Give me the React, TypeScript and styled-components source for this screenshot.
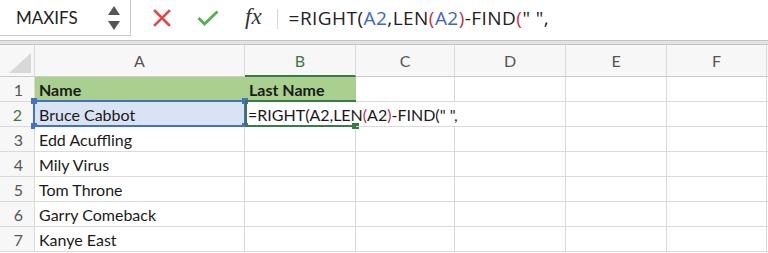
import styled, { createGlobalStyle, css } from 'styled-components';

const GlobalStyle = createGlobalStyle`
    html, body {
        margin: 0;
        padding: 0;
        background: #ffffff;
        overflow: hidden;
    }
    * {
        box-sizing: border-box;
    }
`;

const GRID = '#dadada';
const EXCEL_GREEN = '#3a7a47';
const REF_BLUE = '#4470c8';

const Window = styled.div`
    display: flex;
    flex-direction: column;
    width: 768px;
    height: 253px;
    font-family: Lato, "Open Sans", sans-serif;
    color: #1a1a1a;
`;

const FormulaBar = styled.div`
    display: flex;
    align-items: flex-start;
    height: 40px;
    background: #ffffff;
`;

const NameBox = styled.div`
    display: flex;
    align-items: center;
    justify-content: space-between;
    width: 131px;
    height: 36px;
    padding: 0 10px 0 16px;
    border-right: 1px solid #c8c8c8;
    border-bottom: 1px solid #c8c8c8;
    font-size: 17px;
    color: #222;
`;

const Spinner = styled.div`
    display: flex;
    flex-direction: column;
    gap: 6px;
    margin-top: 1px;
`;

const Actions = styled.div`
    display: flex;
    align-items: center;
    height: 36px;
    padding-left: 22px;
    gap: 26px;
`;

const Fx = styled.span`
    font-family: "Liberation Serif", "DejaVu Serif", serif;
    font-style: italic;
    font-size: 23px;
    color: #333;
    margin-top: -2px;
`;

const Divider = styled.div`
    width: 1px;
    height: 20px;
    margin: 9px 11px 0 15px;
    background: #d6d6d6;
`;

const Formula = styled.div`
    display: flex;
    align-items: center;
    height: 36px;
    font-family: "Open Sans", Lato, sans-serif;
    font-size: 19px;
    letter-spacing: 0.45px;
    color: #222;
    white-space: pre;
`;

const Token = styled.span<{ $tone?: 'ref' | 'paren' }>`
    color: ${(p) => (p.$tone === 'ref' ? '#3a66c4' : p.$tone === 'paren' ? '#c8323a' : 'inherit')};
`;

const Separator = styled.div`
    height: 5px;
    border-top: 1px solid #c4c4c4;
    border-bottom: 1px solid #c4c4c4;
    background: #e4e4e4;
`;

const Sheet = styled.div`
    display: grid;
    grid-template-columns: 35px 210px 111px 99px 111px 101px 100px 1fr;
    grid-template-rows: 32px repeat(7, 25px);
`;

const cellLine = css`
    border-right: 1px solid ${GRID};
    border-bottom: 1px solid ${GRID};
`;

const Corner = styled.div`
    ${cellLine};
    position: relative;
    background: #f7f7f7;
    border-bottom-color: #cbcbcb;
`;

const ColHead = styled.div<{ $active?: boolean }>`
    ${cellLine};
    display: flex;
    align-items: center;
    justify-content: center;
    background: #f7f7f7;
    font-size: 16px;
    color: ${(p) => (p.$active ? EXCEL_GREEN : '#555')};
    border-bottom: ${(p) => (p.$active ? `2px solid ${EXCEL_GREEN}` : '1px solid #cbcbcb')};
`;

const RowHead = styled.div<{ $active?: boolean }>`
    ${cellLine};
    display: flex;
    align-items: center;
    justify-content: flex-end;
    padding-right: 11px;
    background: #f7f7f7;
    font-size: 16px;
    color: ${(p) => (p.$active ? EXCEL_GREEN : '#555')};
    border-right: ${(p) => (p.$active ? `2px solid ${EXCEL_GREEN}` : `1px solid ${GRID}`)};
`;

const Cell = styled.div<{ $header?: boolean; $ref?: boolean }>`
    ${cellLine};
    position: relative;
    display: flex;
    align-items: center;
    padding-left: 4px;
    font-size: 16px;
    white-space: nowrap;
    font-weight: ${(p) => (p.$header ? 700 : 400)};
    background: ${(p) => (p.$header ? '#a9d08e' : p.$ref ? '#dae3f3' : '#ffffff')};
    border-right-color: ${(p) => (p.$header ? '#a9d08e' : GRID)};
    border-bottom-color: ${(p) => (p.$header ? '#a9d08e' : GRID)};
`;

const EditCell = styled.div`
    position: relative;
    display: flex;
    align-items: center;
    padding-left: 3px;
    font-size: 16px;
    white-space: nowrap;
    overflow: visible;
    z-index: 2;
    border-bottom: 1px solid ${GRID};
`;

const RefFrame = styled.div`
    position: absolute;
    inset: -2px -2px -1px -2px;
    border: 2px solid ${REF_BLUE};
    pointer-events: none;
`;

const Handle = styled.span<{ $x: 'left' | 'right'; $y: 'top' | 'bottom'; $color: string }>`
    position: absolute;
    width: 6px;
    height: 6px;
    background: ${(p) => p.$color};
    ${(p) => p.$x}: -4px;
    ${(p) => p.$y}: -4px;
`;

const EditFrame = styled.div`
    position: absolute;
    inset: -2px 0 -1px 0;
    border-top: 2px solid ${EXCEL_GREEN};
    border-left: 2px solid ${EXCEL_GREEN};
    border-bottom: 2px solid ${EXCEL_GREEN};
    pointer-events: none;
`;

const FillHandle = styled.span`
    position: absolute;
    right: -3px;
    bottom: -4px;
    width: 7px;
    height: 6px;
    background: ${EXCEL_GREEN};
`;

const Triangle = () => (
    <svg width="35" height="32" viewBox="0 0 35 32" style={{ position: 'absolute', left: 0, top: 0 }}>
        <polygon points="31,8 31,28 9,28" fill="#d8d8d8" />
    </svg>
);

const CancelIcon = () => (
    <svg width="18" height="18" viewBox="0 0 18 18">
        <path d="M2 2 L16 16 M16 2 L2 16" stroke="#dc4a4a" strokeWidth="2.6" strokeLinecap="square" />
    </svg>
);

const EnterIcon = () => (
    <svg width="22" height="16" viewBox="0 0 22 16">
        <path d="M1.5 8 L7.5 14 L20.5 1.5" stroke="#55b04f" strokeWidth="2.8" fill="none" />
    </svg>
);

const SpinArrow = ({ up }: { up?: boolean }) => (
    <svg width="12" height="9" viewBox="0 0 12 9">
        <polygon points={up ? '6,0 12,9 0,9' : '0,0 12,0 6,9'} fill="#555" />
    </svg>
);

const names = ['Edd Acuffling', 'Mily Virus', 'Tom Throne', 'Garry Comeback', 'Kanye East'];
const columns = ['A', 'B', 'C', 'D', 'E', 'F'];

const Blanks = ({ count }: { count: number }) => (
    <>
        {Array.from({ length: count }, (_, i) => (
            <Cell key={i} />
        ))}
    </>
);

const FormulaText = () => (
    <>
        =RIGHT(<Token $tone="ref">A2</Token>,LEN<Token $tone="paren">(</Token>
        <Token $tone="ref">A2</Token>
        <Token $tone="paren">)</Token>-FIND<Token $tone="paren">(</Token>" ",
    </>
);

const App = () => {
    return (
        <Window>
            <GlobalStyle />
            <FormulaBar>
                <NameBox>
                    MAXIFS
                    <Spinner>
                        <SpinArrow up />
                        <SpinArrow />
                    </Spinner>
                </NameBox>
                <Actions>
                    <CancelIcon />
                    <EnterIcon />
                    <Fx>fx</Fx>
                </Actions>
                <Divider />
                <Formula>
                    <FormulaText />
                </Formula>
            </FormulaBar>
            <Separator />

            <Sheet>
                <Corner>
                    <Triangle />
                </Corner>
                {columns.map((c) => (
                    <ColHead key={c} $active={c === 'B'}>{c}</ColHead>
                ))}
                <ColHead />

                <RowHead>1</RowHead>
                <Cell $header>Name</Cell>
                <Cell $header>Last Name</Cell>
                <Blanks count={5} />

                <RowHead $active>2</RowHead>
                <Cell $ref>
                    Bruce Cabbot
                    <RefFrame>
                        <Handle $x="left" $y="top" $color={REF_BLUE} />
                        <Handle $x="right" $y="top" $color={REF_BLUE} />
                        <Handle $x="left" $y="bottom" $color={REF_BLUE} />
                        <Handle $x="right" $y="bottom" $color={REF_BLUE} />
                    </RefFrame>
                </Cell>
                <EditCell>
                    =RIGHT(A2,LEN<Token $tone="paren">(</Token>A2<Token $tone="paren">)</Token>-FIND(" ",
                    <EditFrame>
                        <FillHandle />
                    </EditFrame>
                </EditCell>
                <EditCell />
                <Blanks count={4} />

                {names.map((n, i) => (
                    <>
                        <RowHead key={`h${i}`}>{i + 3}</RowHead>
                        <Cell key={`n${i}`}>{n}</Cell>
                        <Blanks key={`b${i}`} count={6} />
                    </>
                ))}
            </Sheet>
        </Window>
    );
};

export default App;
